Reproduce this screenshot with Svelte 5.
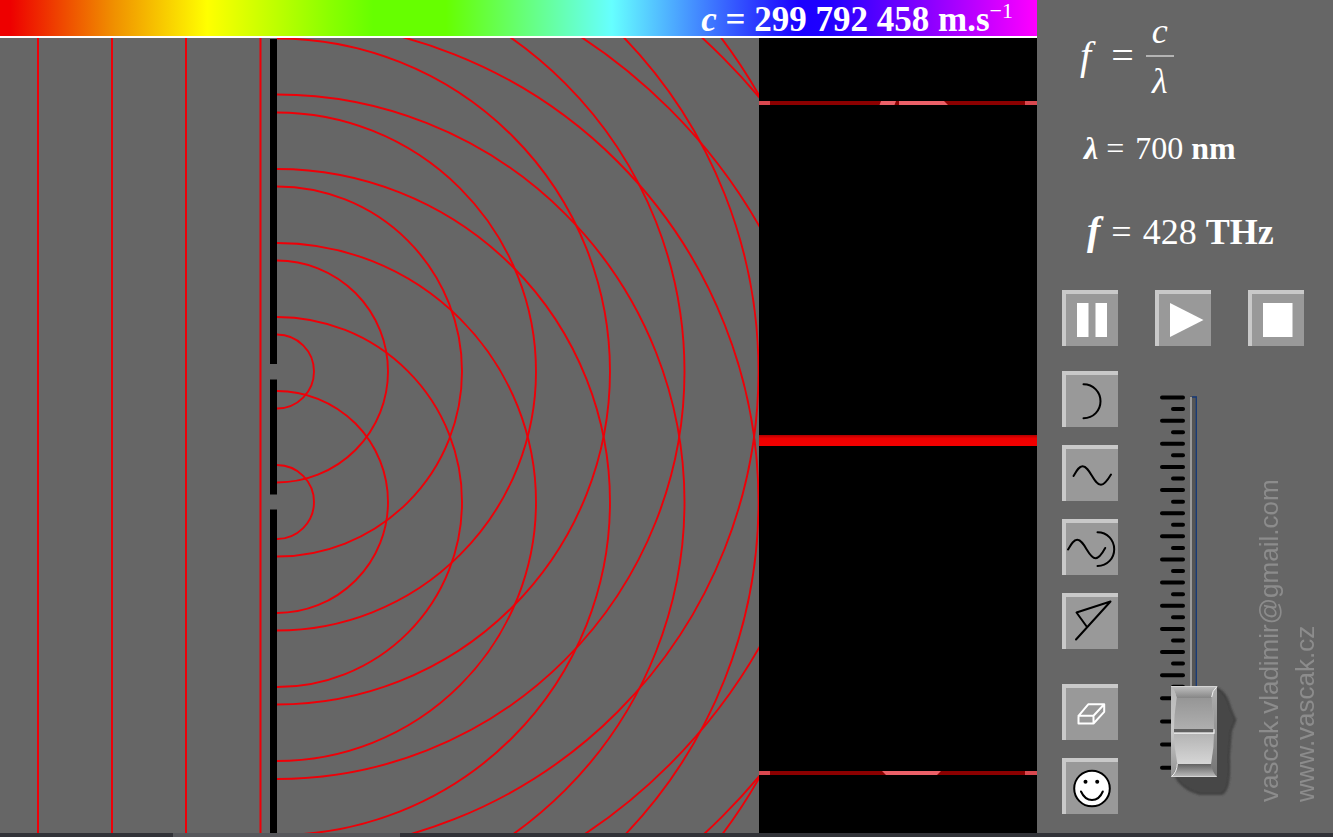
<script>
  const planeWaves = [38, 112, 186, 260.5];
  const slits = [371.5, 502];
  const radii = [37, 111, 185, 259, 333, 407.5, 481.5, 555.5, 629.5];
  const slitX = 277;
  const ticks = Array.from({ length: 33 }, (_, i) => ({
    y: 12.5 + i * 11.57,
    x: i % 2 === 0 ? 7 : 18
  }));
  let level = $state(0);
</script>

<div class="page">
  <main class="bench">
    <header class="spectrum">
      <span class="speed"><i>c</i> = 299 792 458 m.s<sup>−1</sup></span>
    </header>
    <svg class="scene" viewBox="0 38 1037 795" preserveAspectRatio="none" role="img" aria-label="Double slit interference">
      <defs>
        <clipPath id="between"><rect x="277" y="38" width="482" height="795" /></clipPath>
        <linearGradient id="band" x1="0" y1="0" x2="0" y2="1">
          <stop offset="0" stop-color="#b00000" />
          <stop offset="0.3" stop-color="#ee0000" />
          <stop offset="1" stop-color="#f40000" />
        </linearGradient>
      </defs>
      <g stroke="#ee0008" stroke-width="2">
        {#each planeWaves as x}
          <line x1={x} x2={x} y1="38" y2="833" />
        {/each}
      </g>
      <g clip-path="url(#between)" fill="none" stroke="#ee0008" stroke-width="1.9">
        {#each slits as cy}
          {#each radii as r}
            <circle cx={slitX} {cy} {r} />
          {/each}
        {/each}
      </g>
      <rect x="270" y="39" width="7" height="325" />
      <rect x="270" y="379.500" width="7" height="115" />
      <rect x="270" y="509.500" width="7" height="324" />
      <rect x="759" y="38" width="278" height="795" />
      <rect x="759" y="435" width="278" height="11" fill="url(#band)" />
      <g fill="#8b0000">
        <rect x="759" y="101" width="278" height="4" />
        <rect x="759" y="771" width="278" height="4" />
      </g>
      <g fill="#d9484f">
        <rect x="759" y="101" width="11" height="4" />
        <rect x="1025" y="101" width="12" height="4" />
        <rect x="759" y="771" width="11" height="4" />
        <rect x="1025" y="771" width="12" height="4" />
      </g>
      <g fill="#ea6068">
        <path d="M881 101h15l-1.500 4h-15z" />
        <path d="M899 101h45l4 4h-49z" />
        <path d="M882 771h59l-4 4h-51z" />
      </g>
    </svg>
  </main>

  <aside class="panel">
    <div class="formula">
      <i class="big">f</i><span class="big">=</span>
      <span class="fraction"><i>c</i><i>λ</i></span>
    </div>
    <div class="value wavelength"><b><i>λ</i></b><span>=</span><span>700 <b>nm</b></span></div>
    <div class="value frequency"><b class="big"><i>f</i></b><span>=</span><span>428 <b>THz</b></span></div>

    <div class="controls">
      <div class="playback">
        <button aria-label="Pause"><svg viewBox="0 0 56 56" fill="#fff"><path d="M15 13h11.500v34h-11.500zM33.500 13h11.500v34h-11.500z" /></svg></button>
        <button aria-label="Play"><svg viewBox="0 0 56 56" fill="#fff"><path d="M15 13L48.500 30L15 47z" /></svg></button>
        <button aria-label="Stop"><svg viewBox="0 0 56 56" fill="#fff"><path d="M15 13h29.500v34h-29.500z" /></svg></button>
      </div>
      <div class="lower">
        <div class="tools">
          <button aria-label="Wavefronts"><svg viewBox="0 0 56 56" class="ink"><path d="M21.500 13.200c10 0 17 8 17 17s-7 17-17 17" /></svg></button>
          <button aria-label="Wave"><svg viewBox="0 0 56 56" class="ink"><path d="M11.500 31C14.500 26 17 21.200 20.500 21.200C28 21.200 31.500 39.800 39 39.800C42.500 39.800 46 34.500 49 29.500" /></svg></button>
          <button aria-label="Wave and wavefronts"><svg viewBox="0 0 56 56" class="ink"><path d="M6 30.500C9 25.500 11.500 20.800 15.200 20.800C22.500 20.800 26.500 39.200 33.500 39.200C37 39.200 40.500 34 43.200 29M35.500 13.200c10 0 16.700 8 16.700 17s-6.700 16.700-16.700 16.700" /></svg></button>
          <button aria-label="Direction"><svg viewBox="0 0 56 56" class="ink"><path d="M25 34L14.500 19.500L48.500 8.500L14 46.500" /></svg></button>
          <button class="apart" aria-label="Erase"><svg viewBox="0 0 56 56" class="ink pale"><path d="M16.500 31.800h15v7.700h-15zM16.500 31.800l9.700-11.500h16L31.500 31.800M42.200 20.300v7.500L31.500 39.500" /></svg></button>
          <button aria-label="Smile"><svg viewBox="0 0 56 56" class="ink"><circle cx="30" cy="30.500" r="17.800" fill="#fff" /><circle cx="23.500" cy="23.700" r="2" fill="#000" stroke="none" /><circle cx="35.200" cy="23.700" r="2" fill="#000" stroke="none" /><path d="M19 33.500C21.500 39 25.500 42 30 42S38.500 39 40.800 33.500" /></svg></button>
        </div>

        <div class="slider">
          <svg viewBox="0 0 90 420" aria-hidden="true">
            <defs>
              <linearGradient id="top" x1="0" y1="0" x2="0" y2="1"><stop offset="0" stop-color="#c2c2c2" /><stop offset="1" stop-color="#868686" /></linearGradient>
              <linearGradient id="upper" x1="0" y1="0" x2="0" y2="1"><stop offset="0" stop-color="#969696" /><stop offset="1" stop-color="#b0b0b0" /></linearGradient>
              <linearGradient id="under" x1="0" y1="0" x2="0" y2="1"><stop offset="0" stop-color="#b2b2b2" /><stop offset="1" stop-color="#d6d6d6" /></linearGradient>
              <linearGradient id="foot" x1="0" y1="0" x2="0" y2="1"><stop offset="0" stop-color="#626262" /><stop offset="1" stop-color="#bdbdbd" /></linearGradient>
              <linearGradient id="left" x1="0" y1="0" x2="0" y2="1"><stop offset="0" stop-color="#b8b8b8" /><stop offset="0.5" stop-color="#c8c8c8" /><stop offset="1" stop-color="#929292" /></linearGradient>
              <linearGradient id="right" x1="0" y1="0" x2="0" y2="1"><stop offset="0" stop-color="#b0b0b0" /><stop offset="1" stop-color="#747474" /></linearGradient>
              <filter id="soft" x="-20%" y="-20%" width="140%" height="140%"><feGaussianBlur stdDeviation="1.300" /></filter>
            </defs>
            <g stroke="#000" stroke-width="4" stroke-linecap="round">
              {#each ticks as t}
                <line x1={t.x} x2="28" y1={t.y} y2={t.y} />
              {/each}
            </g>
            <rect x="35" y="11" width="7" height="292" fill="#555" />
            <rect x="35" y="12" width="2" height="291" fill="#9a9a9a" />
            <path d="M37 12h4.300v291" fill="none" stroke="#173a78" stroke-width="1.300" />
            <path d="M60 303C69 305 73 314 76 325L80.500 335L76 346L74 372C75 389 74 405 67 409L45 409C33 406 24 399 20 390z" fill="#474747" stroke="#383838" stroke-width="1.500" filter="url(#soft)" />
            <rect x="16" y="301" width="46" height="91" fill="url(#top)" />
            <path d="M16 301h46Q57 306 56.700 313H21.700Q20 305 16 301z" fill="url(#top)" />
            <path d="M16 301Q20 305 21.700 313Q17 346 22.300 379Q20 386 16 392z" fill="url(#left)" />
            <path d="M62 301Q57 306 56.700 313Q62 346 56 379Q57 387 62 392z" fill="url(#right)" />
            <path d="M22.300 379H56Q57 387 62 392H16Q22 387 22.300 379z" fill="url(#foot)" />
            <path d="M21.700 313h35Q59 330 59 346H19Q19 330 21.700 313z" fill="url(#upper)" />
            <path d="M19 347h40Q59 363 56 379H22.300Q19 363 19 347z" fill="url(#under)" />
            <rect x="19" y="344" width="39.500" height="3.500" fill="#606060" />
            <path d="M19 348.200h40v-4" fill="none" stroke="#f2f2f2" stroke-width="1.200" />
            <path d="M16.500 391.500Q22 387 22.300 379M62 301.500Q57 306 56.700 312" fill="none" stroke="#f0f0f0" />
            <path d="M16 301.500h46M16.500 391.500h45" stroke="#d4d4d4" />
          </svg>
          <input type="range" min="0" max="32" bind:value={level} aria-label="Wavelength" />
        </div>

        <div class="contact">
          <a href="mailto:vascak.vladimir@gmail.com">vascak.vladimir@gmail.com</a>
          <a href="http://www.vascak.cz">www.vascak.cz</a>
        </div>
      </div>
    </div>
  </aside>

  <footer class="scroll"><div></div></footer>
</div>

<style>
  :global(body) { margin: 0; background: #666; }
  .page {
    min-height: 100vh;
    display: grid;
    grid-template-columns: minmax(0, 1fr) 296px;
    grid-template-rows: 1fr 4px;
    background: #666;
    color: #fff;
    font-family: "Liberation Serif", "Times New Roman", serif;
  }
  .bench { display: flex; flex-direction: column; min-width: 0; }
  .spectrum {
    display: flex;
    justify-content: flex-end;
    align-items: center;
    box-sizing: border-box;
    height: 38px;
    padding-right: 24px;
    border-bottom: 2px solid #fff;
    background: linear-gradient(90deg, #ee0000 1%, #f09000 11%, #ffff00 20%, #88ff00 32%, #66ff00 36%, #66ff00 43%, #66ffff 59%, #1a00ff 77%, #2000ff 80%, #ff00ff 100%);
  }
  .speed { font-size: 35px; line-height: 36px; font-weight: bold; white-space: nowrap; padding-top: 4px; }
  .speed sup { font-size: 22px; line-height: 1px; font-weight: normal; }
  .scene { display: block; width: 100%; flex: 1; min-height: 0; }

  .panel { display: flex; flex-direction: column; padding: 14px 0 18px 25px; box-sizing: border-box; }
  .formula { display: flex; align-items: center; gap: 12px; padding-left: 18px; height: 84px; font-size: 36px; line-height: 40px; }
  .big { font-size: 40px; line-height: 40px; }
  i.big { margin-right: 8px; }
  .fraction { display: flex; flex-direction: column; align-items: center; width: 28px; }
  .fraction i:first-child { border-bottom: 2px solid #b4b4b4; width: 28px; padding-bottom: 4px; text-align: center; }
  .fraction i:last-child { padding-top: 4px; }
  .value { display: flex; align-items: baseline; white-space: nowrap; }
  .wavelength { font-size: 32px; line-height: 40px; padding-left: 22px; margin-top: 30px; gap: 11px; }
  .wavelength b:first-child { margin-right: -3px; }
  .frequency { font-size: 36px; line-height: 40px; padding-left: 25px; margin-top: 43px; gap: 11px; }

  .controls { margin-top: 38px; }
  .playback { display: flex; gap: 37px; }
  .lower { display: flex; margin-top: 25px; }
  .tools { display: flex; flex-direction: column; gap: 18px; }
  .apart { margin-top: 17px; }
  button {
    display: block;
    width: 56px;
    height: 56px;
    padding: 0;
    border: 0;
    background: #999;
    box-shadow: inset 4px 4px #c9c9c9;
    cursor: pointer;
  }
  button svg { display: block; width: 56px; height: 56px; }
  .ink { fill: none; stroke: #000; stroke-width: 2; stroke-linejoin: round; stroke-linecap: round; }
  .pale { stroke: #fff; }

  .slider { position: relative; width: 90px; height: 420px; margin: 14px 0 0 37px; }
  .slider svg { display: block; width: 90px; height: 420px; }
  .slider input {
    position: absolute;
    inset: 12px 28px 28px 16px;
    width: 46px;
    height: 380px;
    margin: 0;
    opacity: 0;
    writing-mode: vertical-lr;
    direction: rtl;
    cursor: pointer;
  }
  .contact {
    display: flex;
    flex-direction: column;
    writing-mode: vertical-rl;
    transform: rotate(180deg);
    margin-left: 6px;
    margin-bottom: 12px;
    font: 26px/36px "Liberation Sans", Arial, sans-serif;
  }
  .contact a { color: #8c8c8c; text-decoration: none; white-space: nowrap; }

  .scroll { grid-column: 1 / -1; background: #323338; }
  .scroll div { width: 17%; height: 4px; margin-left: 13%; background: #57585c; }
</style>
